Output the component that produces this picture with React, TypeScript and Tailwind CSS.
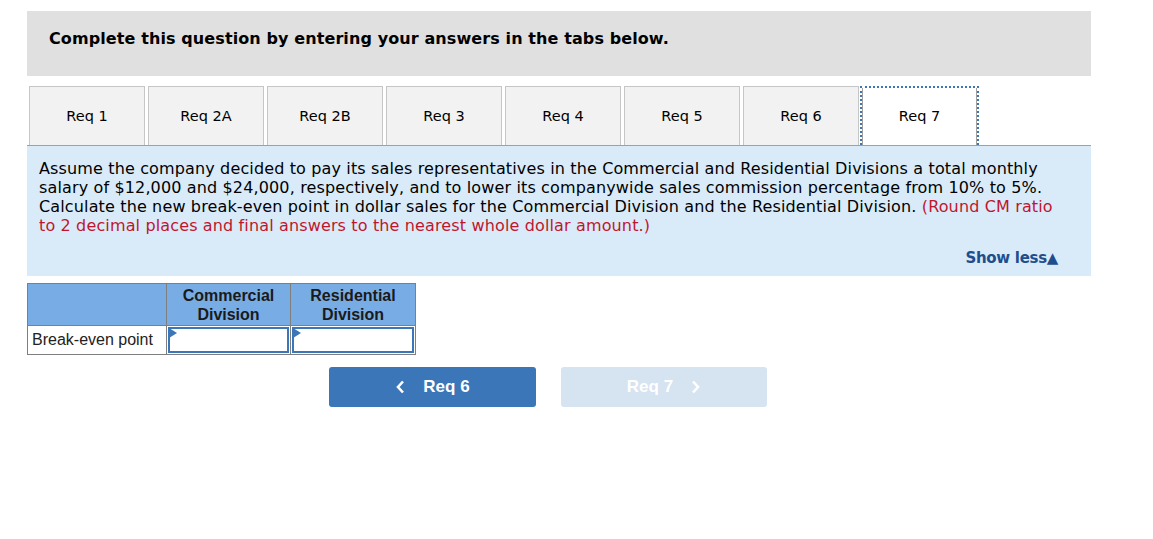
import React from 'react';

const tabs = ['Req 1', 'Req 2A', 'Req 2B', 'Req 3', 'Req 4', 'Req 5', 'Req 6'];

const AnswerCell: React.FC = () => (
  <td className="border border-[#7f7f7f] p-0">
    <div className="relative m-px h-[26px] border-2 border-[#3a76b8] bg-white">
      <span className="absolute left-[-1px] top-[-1px] h-0 w-0 border-y-[5px] border-l-[8px] border-y-transparent border-l-[#3a76b8]" />
    </div>
  </td>
);

const App: React.FC = () => {
  return (
    <div className="min-h-[539px] w-[1153px] bg-white font-['DejaVu_Sans',Verdana,sans-serif] text-black">
      <div className="pl-[27px] pt-[11px] w-[1091px]">
        <header className="flex h-[65px] items-start bg-[#e0e0e0] pl-[22px] pt-[16px]">
          <h2 className="text-[16px] font-bold tracking-[0.1px]">Complete this question by entering your answers in the tabs below.</h2>
        </header>

        <nav className="mt-[10px] flex gap-[3px] border-b border-[#a0a0a0] pl-[2px]">
          {tabs.map((tab) => (
            <div
              key={tab}
              className="flex h-[59px] w-[116px] items-center justify-center border border-b-0 border-[#c6c6c6] bg-[#f2f2f2] pt-[2px] text-[14.5px]"
            >
              {tab}
            </div>
          ))}
          <div className="-ml-[2px] h-[59px] w-[119px] border-2 border-b-0 border-dotted border-[#3a76b8]">
            <div className="flex h-full items-center justify-center border-x border-[#a0a0a0] bg-white text-[14.5px]">
              Req 7
            </div>
          </div>
        </nav>

        <section className="h-[130px] bg-[#d9ebf9] px-[12px] pt-[13px]">
          <p className="w-[1025px] text-[16px] leading-[19px] tracking-[0.14px]">
            Assume the company decided to pay its sales representatives in the Commercial and Residential Divisions a total monthly salary of $12,000 and $24,000, respectively, and to lower its companywide sales commission percentage from 10% to 5%. Calculate the new break-even point in dollar sales for the Commercial Division and the Residential Division.{' '}
            <span className="text-[#c0162d]">(Round CM ratio to 2 decimal places and final answers to the nearest whole dollar amount.)</span>
          </p>
          <div className="mt-[12px] flex justify-end pr-[21px]">
            <span className="text-[15px] font-bold tracking-[-0.3px] text-[#1f4e8c]">Show less▲</span>
          </div>
        </section>

        <table className="mt-[7px] border-collapse font-['Liberation_Sans',Arial,sans-serif] text-[16px]">
          <thead>
            <tr className="h-[42px] bg-[#78ace5]">
              <th className="w-[139px] border border-[#7f7f7f]" />
              <th className="w-[124px] border border-[#7f7f7f] text-[16px] font-bold leading-[19px] text-[#1a1a1a]">Commercial<br />Division</th>
              <th className="w-[125px] border border-[#7f7f7f] text-[16px] font-bold leading-[19px] text-[#1a1a1a]">Residential<br />Division</th>
            </tr>
          </thead>
          <tbody>
            <tr className="h-[28px]">
              <td className="border border-[#7f7f7f] pl-[4px] text-[16px] text-[#222]">Break-even point</td>
              <AnswerCell />
              <AnswerCell />
            </tr>
          </tbody>
        </table>

        <div className="mt-[12px] flex gap-[25px] pl-[302px] font-['Liberation_Sans',Arial,sans-serif]">
          <button className="flex h-[40px] w-[207px] items-center justify-center gap-[18px] rounded-[3px] bg-[#3a76b8] text-[17px] font-bold text-white">
            <svg width="10" height="14" viewBox="0 0 10 14" fill="none" stroke="white" strokeWidth="2.6"><path d="M8 1.5 L3 7 L8 12.5" /></svg>
            <span>Req 6</span>
          </button>
          <button className="flex h-[40px] w-[206px] items-center justify-center gap-[18px] rounded-[3px] bg-[#d6e3f1] text-[17px] font-bold text-white">
            <span>Req 7</span>
            <svg width="10" height="14" viewBox="0 0 10 14" fill="none" stroke="white" strokeWidth="2.6"><path d="M2 1.5 L7 7 L2 12.5" /></svg>
          </button>
        </div>
      </div>
    </div>
  );
};

export default App;
